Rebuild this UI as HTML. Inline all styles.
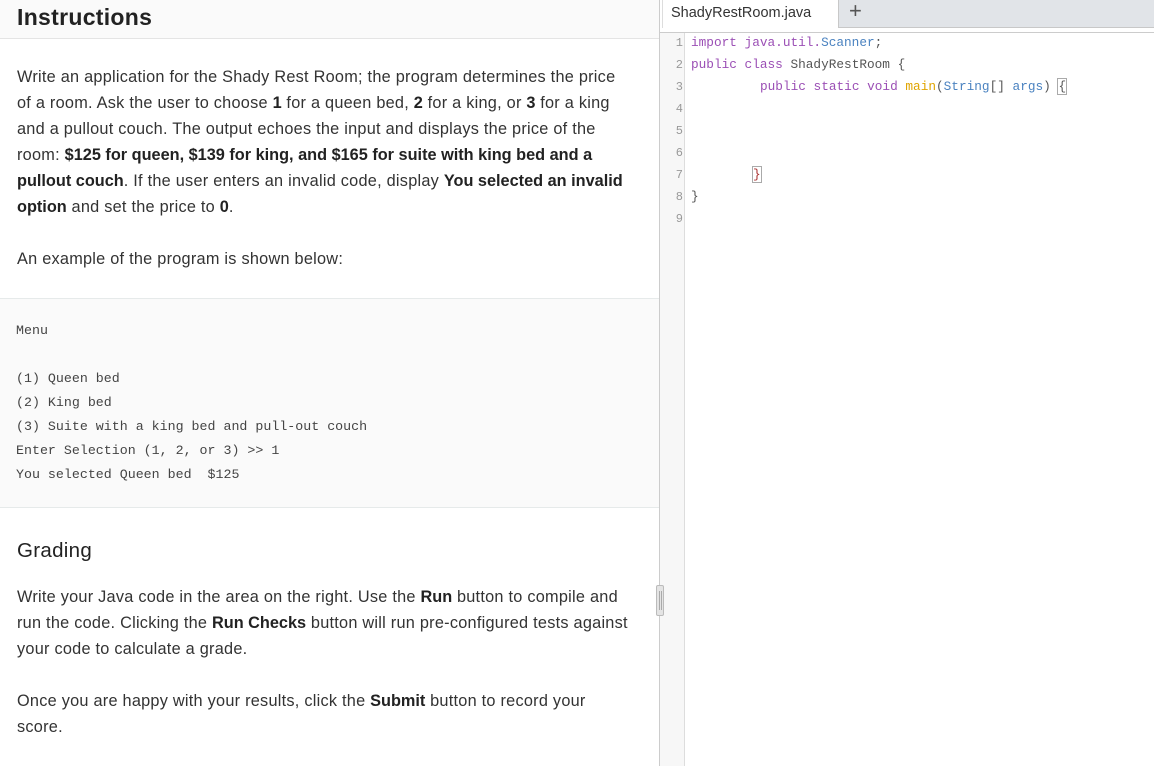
<!DOCTYPE html>
<html><head><meta charset="utf-8"><style>
*{margin:0;padding:0;box-sizing:border-box}
body{width:1154px;height:766px;overflow:hidden;background:#fff;font-family:"Liberation Sans",sans-serif;color:#333;position:relative}
.l{position:absolute;white-space:nowrap;font-size:16.3px;line-height:26px;left:17px;letter-spacing:0.25px}
.m{position:absolute;white-space:nowrap;font-family:"Liberation Mono",monospace;font-size:13.3px;line-height:24px;left:16px;color:#444}
.c{position:absolute;white-space:nowrap;font-family:"Liberation Mono",monospace;font-size:12.75px;line-height:22px;left:691px;color:#555}
.n{position:absolute;font-family:"Liberation Mono",monospace;font-size:12px;line-height:22px;left:660px;width:23px;text-align:right;color:#999}
b{font-weight:bold;color:#222;letter-spacing:0}
.k{color:#9b4fb5}.f{color:#e0a400}.v{color:#4a82c0}
</style></head><body>
<div style="position:absolute;left:0;top:0;width:659px;height:39px;background:#fafafa;border-bottom:1px solid #e4e4e4"></div>
<div style="position:absolute;left:17px;top:2px;font-size:23px;font-weight:bold;color:#222;line-height:30px;letter-spacing:0.3px">Instructions</div>

<div class="l" style="top:64px">Write an application for the Shady Rest Room; the program determines the price</div>
<div class="l" style="top:90px">of a room. Ask the user to choose <b>1</b> for a queen bed, <b>2</b> for a king, or <b>3</b> for a king</div>
<div class="l" style="top:116px">and a pullout couch. The output echoes the input and displays the price of the</div>
<div class="l" style="top:142px">room: <b>$125 for queen, $139 for king, and $165 for suite with king bed and a</b></div>
<div class="l" style="top:168px"><b>pullout couch</b>. If the user enters an invalid code, display <b>You selected an invalid</b></div>
<div class="l" style="top:194px"><b>option</b> and set the price to <b>0</b>.</div>
<div class="l" style="top:246px">An example of the program is shown below:</div>

<div style="position:absolute;left:0;top:298px;width:659px;height:210px;background:#fafafa;border-top:1px solid #e6eaea;border-bottom:1px solid #e6eaea"></div>
<div class="m" style="top:319px">Menu</div>
<div class="m" style="top:367px">(1) Queen bed</div>
<div class="m" style="top:391px">(2) King bed</div>
<div class="m" style="top:415px">(3) Suite with a king bed and pull-out couch</div>
<div class="m" style="top:439px">Enter Selection (1, 2, or 3) &gt;&gt; 1</div>
<div class="m" style="top:463px">You selected Queen bed&nbsp; $125</div>

<div style="position:absolute;left:17px;top:537px;font-size:20.5px;color:#222;line-height:28px;letter-spacing:0.3px">Grading</div>
<div class="l" style="top:584px">Write your Java code in the area on the right. Use the <b>Run</b> button to compile and</div>
<div class="l" style="top:610px">run the code. Clicking the <b>Run Checks</b> button will run pre-configured tests against</div>
<div class="l" style="top:636px">your code to calculate a grade.</div>
<div class="l" style="top:688px">Once you are happy with your results, click the <b>Submit</b> button to record your</div>
<div class="l" style="top:714px">score.</div>

<div style="position:absolute;left:838px;top:0;width:316px;height:28px;background:#e1e4e8;border-bottom:1px solid #c8c8c8;border-left:1px solid #c8c8c8"></div>
<div style="position:absolute;left:662px;top:0;width:1px;height:28px;background:#ddd"></div>
<div style="position:absolute;left:671px;top:3px;font-size:14.5px;line-height:20px;color:#333">ShadyRestRoom.java</div>
<div style="position:absolute;left:849px;top:-2px;font-size:22px;line-height:26px;color:#555">+</div>
<div style="position:absolute;left:660px;top:32px;width:494px;height:1px;background:#ccc"></div>
<div style="position:absolute;left:660px;top:33px;width:25px;height:733px;background:#f7f7f7;border-right:1px solid #ddd"></div>

<div class="n" style="top:32px">1</div><div class="n" style="top:54px">2</div><div class="n" style="top:76px">3</div><div class="n" style="top:98px">4</div><div class="n" style="top:120px">5</div><div class="n" style="top:142px">6</div><div class="n" style="top:164px">7</div><div class="n" style="top:186px">8</div><div class="n" style="top:208px">9</div>
<div class="c" style="top:32px"><span class="k">import java.util.</span><span class="v">Scanner</span>;</div>
<div class="c" style="top:54px"><span class="k">public class</span> ShadyRestRoom {</div>
<div class="c" style="top:76px;left:760px"><span class="k">public static void</span> <span class="f">main</span>(<span class="v">String</span>[] <span class="v">args</span>) <span style="outline:1px solid #aaa">{</span></div>
<div class="c" style="top:164px;left:753px"><span style="outline:1px solid #aaa;color:#a33">}</span></div>
<div class="c" style="top:186px">}</div>

<div style="position:absolute;left:659px;top:0;width:1px;height:766px;background:#ccc"></div>
<div style="position:absolute;left:656px;top:585px;width:8px;height:31px;border:1px solid #bbb;border-radius:2px;background:#e4e4e4"></div>
<div style="position:absolute;left:659px;top:591px;width:1px;height:19px;background:#aaa"></div>
<div style="position:absolute;left:661px;top:591px;width:1px;height:19px;background:#aaa"></div>
</body></html>
